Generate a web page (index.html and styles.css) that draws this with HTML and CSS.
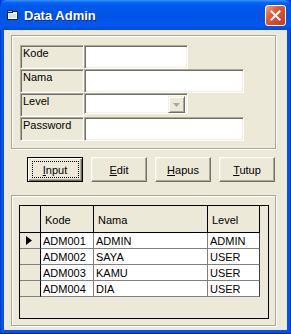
FILE: index.html
```html
<!DOCTYPE html>
<html>
<head>
    <meta charset="UTF-8">
    <title>Data Admin</title>
    <link rel="stylesheet" href="styles.css">
</head>
<body>
<div class="window">
    <div class="titlebar">
        <svg class="app-icon" width="12" height="11" viewBox="0 0 12 11">
            <rect x="0.5" y="1.5" width="10" height="8" fill="#ffffff" stroke="#0a1e6e"/>
            <rect x="0.5" y="0.5" width="5" height="2" fill="#9cc4ff" stroke="#0a1e6e"/>
            <rect x="2" y="4" width="7" height="4" fill="#cfe0f7"/>
        </svg>
        <span class="title">Data Admin</span>
        <div class="close-btn">
            <svg width="11" height="11" viewBox="0 0 11 11">
                <path d="M1.5 1.5 L9.5 9.5 M9.5 1.5 L1.5 9.5" stroke="#ffffff" stroke-width="2" stroke-linecap="square"/>
            </svg>
        </div>
    </div>
    <div class="client">
        <div class="frame form-frame">
            <div class="field-row">
                <div class="label">Kode</div>
                <div class="textbox short"></div>
            </div>
            <div class="field-row">
                <div class="label">Nama</div>
                <div class="textbox long"></div>
            </div>
            <div class="field-row">
                <div class="label">Level</div>
                <div class="combo">
                    <div class="combo-btn">
                        <svg width="7" height="4" viewBox="0 0 7 4"><path d="M0 0 H7 L3.5 4 Z" fill="#aca899"/></svg>
                    </div>
                </div>
            </div>
            <div class="field-row">
                <div class="label">Password</div>
                <div class="textbox long"></div>
            </div>
        </div>

        <div class="buttons">
            <div class="btn btn-default"><span><u>I</u>nput</span></div>
            <div class="btn"><span><u>E</u>dit</span></div>
            <div class="btn"><span><u>H</u>apus</span></div>
            <div class="btn"><span><u>T</u>utup</span></div>
        </div>

        <div class="frame grid-frame">
            <div class="grid">
                <table>
                    <tr class="head">
                        <th class="fixed"></th>
                        <th class="c-kode">Kode</th>
                        <th class="c-nama">Nama</th>
                        <th class="c-level">Level</th>
                    </tr>
                    <tr>
                        <td class="fixed"><svg class="pointer" width="6" height="9" viewBox="0 0 6 9"><path d="M0 0 L6 4.5 L0 9 Z" fill="#000"/></svg></td>
                        <td>ADM001</td><td>ADMIN</td><td class="c-level">ADMIN</td>
                    </tr>
                    <tr>
                        <td class="fixed"></td>
                        <td>ADM002</td><td>SAYA</td><td class="c-level">USER</td>
                    </tr>
                    <tr>
                        <td class="fixed"></td>
                        <td>ADM003</td><td>KAMU</td><td class="c-level">USER</td>
                    </tr>
                    <tr>
                        <td class="fixed"></td>
                        <td>ADM004</td><td>DIA</td><td class="c-level">USER</td>
                    </tr>
                </table>
            </div>
        </div>
    </div>
</div>
</body>
</html>
```

FILE: styles.css
```css
/* Data Admin form, XP look */

body {
    margin: 0;
    padding: 0;
    background: #ffffff;
    font-family: "Liberation Sans", Arial, sans-serif;
    font-size: 11px;
    color: #000;
}

.window {
    width: 291px;
    height: 334px;
    box-sizing: border-box;
    display: flex;
    flex-direction: column;
    background: #0055e5;
    box-shadow: inset 1px 0 #0831d9, inset -1px 0 #0831d9, inset 0 -1px #001ea0;
}

.titlebar {
    height: 30px;
    flex: none;
    display: flex;
    align-items: center;
    padding: 0 5px 0 7px;
    border-radius: 7px 7px 0 0;
    background: linear-gradient(to bottom, #3d95ff 0%, #0a66f5 8%, #0058ee 20%, #0055e5 55%, #0058ee 85%, #0048d8 100%);
}

.app-icon {
    flex: none;
    margin-top: 1px;
}

.title {
    flex: 1;
    margin-left: 5px;
    color: #fff;
    font-weight: bold;
    font-size: 13px;
    text-shadow: 1px 1px #0a2a8a;
}

.close-btn {
    width: 21px;
    height: 21px;
    box-sizing: border-box;
    border: 1px solid #ffffff;
    border-radius: 3px;
    background: linear-gradient(135deg, #f4a083 0%, #e45c38 35%, #d4482a 70%, #c13a1c 100%);
    display: flex;
    align-items: center;
    justify-content: center;
}

.client {
    flex: 1;
    margin: 0 4px 4px;
    padding: 5px 0 0 7px;
    background: #ece9d8;
}

/* etched frame */
.frame {
    width: 265px;
    box-sizing: border-box;
    border: 1px solid #aca899;
    box-shadow: inset 1px 1px #fff, 1px 1px #fff;
}

.form-frame {
    height: 114px;
    padding: 9px 0 0 8px;
}

.field-row {
    display: flex;
    height: 24px;
}

.label, .textbox, .combo {
    box-sizing: border-box;
    border: 1px solid;
    border-color: #aca899 #fff #fff #aca899;
    box-shadow: inset 1px 1px #716f64, inset -1px -1px #f1efe2;
}

.label {
    width: 64px;
    height: 24px;
    padding: 1px 0 0 2px;
    line-height: 13px;
}

.textbox {
    height: 24px;
    background: #fff;
}

.short {
    width: 104px;
}

.long {
    width: 160px;
}

.combo {
    width: 104px;
    height: 21px;
    background: #fff;
    display: flex;
    justify-content: flex-end;
    padding: 2px;
}

.combo-btn {
    width: 17px;
    height: 17px;
    box-sizing: border-box;
    background: #ece9d8;
    border: 1px solid;
    border-color: #f1efe2 #716f64 #716f64 #f1efe2;
    box-shadow: inset 1px 1px #fff, inset -1px -1px #aca899;
    display: flex;
    align-items: center;
    justify-content: center;
}

/* command buttons */
.buttons {
    display: flex;
    gap: 8px;
    margin: 8px 0 0 16px;
}

.btn {
    position: relative;
    width: 56px;
    height: 25px;
    box-sizing: border-box;
    background: #ece9d8;
    border: 1px solid;
    border-color: #fff #716f64 #716f64 #fff;
    box-shadow: inset -1px -1px #aca899, inset 1px 1px #f1efe2;
    display: flex;
    align-items: center;
    justify-content: center;
}

.btn-default {
    border: 1px solid #000;
    box-shadow: inset 1px 1px #fff, inset -1px -1px #716f64, inset -2px -2px #aca899;
}

.btn-default::after {
    content: "";
    position: absolute;
    left: 4px;
    top: 3px;
    right: 3px;
    bottom: 3px;
    border: 1px dotted #000;
}

/* grid */
.grid-frame {
    height: 131px;
    margin-top: 13px;
    padding: 9px 0 0 7px;
}

.grid {
    width: 250px;
    height: 114px;
    box-sizing: border-box;
    border: 1px solid #000;
    background: #ece9d8;
}

table {
    border-collapse: separate;
    border-spacing: 0;
    table-layout: fixed;
    width: 240px;
}

th, td {
    box-sizing: border-box;
    padding: 0 0 0 2px;
    text-align: left;
    font-weight: normal;
    white-space: nowrap;
    overflow: hidden;
    background: #fff;
    border-right: 1px solid #808080;
    border-bottom: 1px solid #808080;
    height: 16px;
    line-height: 14px;
}

.head th {
    height: 27px;
    padding-left: 4px;
    padding-top: 2px;
    background: #ece9d8;
    border-right: 1px solid #000;
    border-bottom: 1px solid #000;
}

td.fixed, th.fixed {
    width: 21px;
    padding: 0;
    background: #ece9d8;
    border-right: 1px solid #000;
}

.c-kode {
    width: 53px;
}

.c-nama {
    width: 114px;
}

.c-level {
    width: 52px;
}

td.c-level {
    border-right: 1px solid #404040;
}

.pointer {
    display: block;
    margin-left: 6px;
}
```
